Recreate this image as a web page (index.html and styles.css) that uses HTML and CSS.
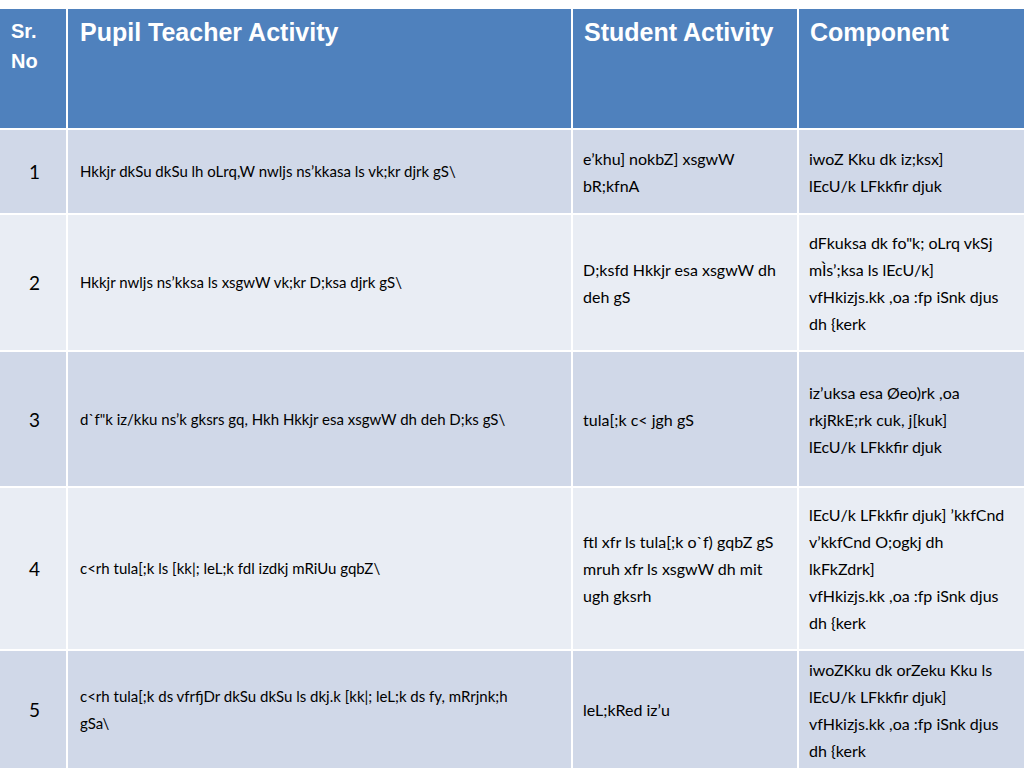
FILE: index.html
```html
<!DOCTYPE html>
<html>
<head>
<meta charset="utf-8">
<link rel="stylesheet" href="styles.css">
</head>
<body>
<div class="table">
  <div class="cell head c1">Sr.<br>No</div>
  <div class="cell head c2">Pupil Teacher Activity</div>
  <div class="cell head c3">Student Activity</div>
  <div class="cell head c4">Component</div>

  <div class="cell odd num">1</div>
  <div class="cell odd t2">Hkkjr dkSu dkSu lh oLrq,W nwljs ns’kkasa ls vk;kr djrk gS\</div>
  <div class="cell odd t3">e’khu] nokbZ] xsgwW<br>bR;kfnA</div>
  <div class="cell odd t4">iwoZ Kku dk iz;ksx]<br>lEcU/k LFkkfir djuk</div>

  <div class="cell even num">2</div>
  <div class="cell even t2">Hkkjr nwljs ns’kksa ls xsgwW vk;kr D;ksa djrk gS\</div>
  <div class="cell even t3">D;ksfd Hkkjr esa xsgwW dh<br>deh gS</div>
  <div class="cell even t4">dFkuksa dk fo"k; oLrq vkSj<br>mÌs’;ksa ls lEcU/k]<br>vfHkizjs.kk ,oa :fp iSnk djus<br>dh {kerk</div>

  <div class="cell odd num">3</div>
  <div class="cell odd t2">d`f"k iz/kku ns’k gksrs gq, Hkh Hkkjr esa xsgwW dh deh D;ks gS\</div>
  <div class="cell odd t3">tula[;k c&lt; jgh gS</div>
  <div class="cell odd t4">iz’uksa esa Øeo)rk ,oa<br>rkjRkE;rk cuk, j[kuk]<br>lEcU/k LFkkfir djuk</div>

  <div class="cell even num">4</div>
  <div class="cell even t2">c&lt;rh tula[;k ls [kk|; leL;k fdl izdkj mRiUu gqbZ\</div>
  <div class="cell even t3">ftl xfr ls tula[;k o`f) gqbZ gS<br>mruh xfr ls xsgwW dh mit<br>ugh gksrh</div>
  <div class="cell even t4">lEcU/k LFkkfir djuk] ’kkfCnd<br>v’kkfCnd O;ogkj dh<br>lkFkZdrk]<br>vfHkizjs.kk ,oa :fp iSnk djus<br>dh {kerk</div>

  <div class="cell odd num">5</div>
  <div class="cell odd t2">c&lt;rh tula[;k ds vfrfjDr dkSu dkSu ls dkj.k [kk|; leL;k ds fy, mRrjnk;h<br>gSa\</div>
  <div class="cell odd t3">leL;kRed iz’u</div>
  <div class="cell odd t4">iwoZKku dk orZeku Kku ls<br>lEcU/k LFkkfir djuk]<br>vfHkizjs.kk ,oa :fp iSnk djus<br>dh {kerk</div>
</div>
</body>
</html>
```
FILE: styles.css
```css
html, body {
  margin: 0;
  padding: 0;
  background: #ffffff;
}
body {
  padding-top: 9px;
  overflow: hidden;
}
.table {
  display: grid;
  grid-template-columns: 66px 503px 224px 225px;
  grid-template-rows: 119px 83px 135px 134px 161px 117px;
  gap: 2px;
  width: 1024px;
}
.cell {
  box-sizing: border-box;
  font-family: Lato, "Open Sans", sans-serif;
  color: #000000;
  display: flex;
  align-items: center;
}
.head {
  background: #4f81bd;
  color: #ffffff;
  font-family: "Liberation Sans", Arial, sans-serif;
  font-weight: bold;
  align-items: flex-start;
  padding-top: 8px;
  font-size: 25px;
  line-height: 30px;
}
.head.c1 {
  font-size: 20px;
  line-height: 30px;
  padding-left: 11px;
  padding-top: 7px;
}
.head.c2 { padding-left: 12px; }
.head.c3 { padding-left: 11px; }
.head.c4 { padding-left: 11px; }
.odd { background: #d0d8e8; }
.even { background: #e9edf4; }
.num {
  justify-content: center;
  font-size: 19px;
  padding-left: 3px;
}
.t2 {
  font-size: 15px;
  line-height: 27px;
  padding-left: 12px;
  padding-right: 10px;
}
.t3, .t4 {
  font-size: 16px;
  line-height: 27px;
  padding-left: 10px;
  padding-right: 6px;
  white-space: nowrap;
}
```
